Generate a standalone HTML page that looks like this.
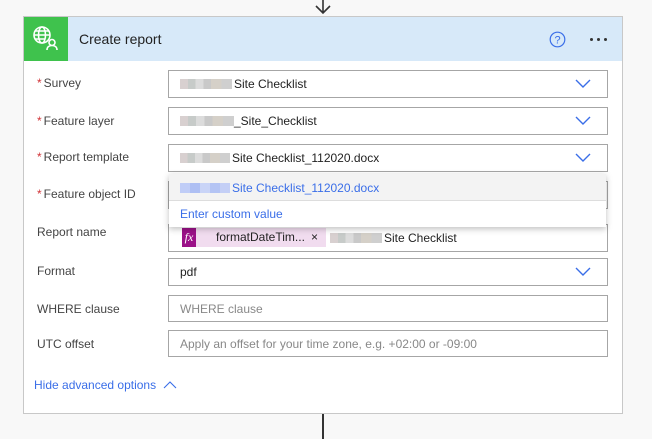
<!DOCTYPE html>
<html><head><meta charset="utf-8"><style>
*{box-sizing:border-box;margin:0;padding:0}
body{width:652px;height:439px;background:#f8f8f8;font-family:"Segoe UI","Liberation Sans",sans-serif;font-size:12px;color:#333;position:relative;overflow:hidden}
.card{position:absolute;left:23px;top:16px;width:600px;height:398px;background:#fff;border:1px solid #c8c8c8}
.hdr{position:absolute;left:0;top:0;width:598px;height:44px;background:#d7e9f9}
.ico{position:absolute;left:0;top:0;width:44px;height:44px;background:#3fc24d}
.title{position:absolute;left:55px;top:14px;font-size:14px;color:#222}
.lbl{position:absolute;left:13px;font-size:12px;color:#444}
.lbl b{color:#d13438;font-weight:normal;margin-right:2px}
.inp{position:absolute;left:144px;width:440px;height:28px;border:1px solid #a6a6a6;background:#fff;padding:0 0 0 11px;line-height:27px;font-size:12px;color:#222;white-space:nowrap}
.ph{color:#888}
.chev{position:absolute;right:16px;top:8px}
.blur{display:inline-block;height:10px;vertical-align:-1px;margin-right:2px;background:linear-gradient(90deg,#d8d0d0 0 15%,#c7cbc9 15% 30%,#dcdcdc 30% 45%,#c9c9c9 45% 60%,#d5d0c8 60% 80%,#cfcfcf 80%)}
.bblue{background:linear-gradient(90deg,#c0cdf7 0 20%,#aebff3 20% 40%,#c9d4f7 40% 60%,#b4c4f4 60% 80%,#c4cff6 80%)}
.dd{position:absolute;left:145px;top:157px;width:437px;height:53px;background:#fff;box-shadow:0 2px 6px rgba(0,0,0,.25);z-index:5}
.dd .o1{height:27px;background:#f3f3f3;border-bottom:1px solid #ddd;padding-left:11px;line-height:28px;color:#3a6ee8}
.dd .o2{height:26px;padding-left:11px;line-height:27px;color:#3a6ee8}
</style></head><body>
<svg style="position:absolute;left:314px;top:0" width="18" height="16"><path d="M9 0V13M2 6L9 13L16 6" stroke="#333" stroke-width="1.6" fill="none"/></svg>
<div style="position:absolute;left:322px;top:414px;width:2px;height:25px;background:#333"></div>
<div class="card">
 <div class="hdr">
  <div class="ico"><svg width="44" height="44" viewBox="0 0 44 44" fill="none" stroke="#fff" stroke-width="1.6"><circle cx="18" cy="18" r="8"/><ellipse cx="18" cy="18" rx="3.5" ry="8"/><path d="M10 18H26M11.5 14H24.5M11.5 22H21"/><circle cx="28" cy="25.5" r="3" fill="#3fc24d"/><path d="M23 33c0-3 2.2-4.5 5-4.5s5 1.5 5 4.5" fill="#3fc24d"/></svg></div>
  <div class="title">Create report</div>
  <svg style="position:absolute;left:525px;top:14px" width="17" height="17"><circle cx="8.5" cy="8.5" r="7.3" stroke="#3a6ee8" stroke-width="1.2" fill="none"/><text x="8.5" y="12.5" font-size="11" text-anchor="middle" fill="#3a6ee8" font-family="Liberation Sans">?</text></svg>
  <div style="position:absolute;left:566px;top:21px;width:3px;height:3px;background:#333;border-radius:50%;box-shadow:7px 0 #333,14px 0 #333"></div>
 </div>
 <div class="lbl" style="top:59px"><b>*</b>Survey</div>
 <div class="inp" style="top:53px"><span class="blur" style="width:52px"></span>Site Checklist<svg class="chev" width="16" height="10"><path d="M1 1L8 8L15 1" stroke="#3a6ee8" stroke-width="1.4" fill="none"/></svg></div>
 <div class="lbl" style="top:97px"><b>*</b>Feature layer</div>
 <div class="inp" style="top:90px"><span class="blur" style="width:54px;margin-right:0"></span>_Site_Checklist<svg class="chev" width="16" height="10"><path d="M1 1L8 8L15 1" stroke="#3a6ee8" stroke-width="1.4" fill="none"/></svg></div>
 <div class="lbl" style="top:133px"><b>*</b>Report template</div>
 <div class="inp" style="top:127px"><span class="blur" style="width:50px"></span>Site Checklist_112020.docx<svg class="chev" width="16" height="10"><path d="M1 1L8 8L15 1" stroke="#3a6ee8" stroke-width="1.4" fill="none"/></svg></div>
 <div class="dd"><div class="o1"><span class="blur bblue" style="width:50px"></span>Site Checklist_112020.docx</div><div class="o2">Enter custom value</div></div>
 <div class="lbl" style="top:170px"><b>*</b>Feature object ID</div>
 <div class="inp" style="top:164px"></div>
 <div class="lbl" style="top:208px">Report name</div>
 <div class="inp" style="top:207px;padding-left:13px"><span style="display:inline-block;vertical-align:middle;height:19px;width:144px;background:#f1dcef;position:relative;top:-1px"><span style="position:absolute;left:0;top:0;width:14px;height:19px;background:#9b1188;color:#fff;font-family:'Liberation Serif',serif;font-style:italic;font-size:12px;line-height:19px;text-align:center">fx</span><span style="position:absolute;left:34px;top:0;line-height:19px;color:#222">formatDateTim...</span><span style="position:absolute;left:129px;top:0;line-height:19px;color:#222">×</span></span><span class="blur" style="width:52px;margin-left:4px"></span>Site Checklist</div>
 <div class="lbl" style="top:247px">Format</div>
 <div class="inp" style="top:241px">pdf<svg class="chev" width="16" height="10"><path d="M1 1L8 8L15 1" stroke="#3a6ee8" stroke-width="1.4" fill="none"/></svg></div>
 <div class="lbl" style="top:285px">WHERE clause</div>
 <div class="inp ph" style="top:278px;height:27px;line-height:26px">WHERE clause</div>
 <div class="lbl" style="top:320px">UTC offset</div>
 <div class="inp ph" style="top:313px;height:27px;line-height:26px">Apply an offset for your time zone, e.g. +02:00 or -09:00</div>
 <div style="position:absolute;left:10px;top:361px;color:#3a6ee8;font-size:12px">Hide advanced options <svg width="14" height="9" style="margin-left:4px"><path d="M1 8L7 2L13 8" stroke="#3a6ee8" stroke-width="1.1" fill="none"/></svg></div>
</div>
</body></html>
